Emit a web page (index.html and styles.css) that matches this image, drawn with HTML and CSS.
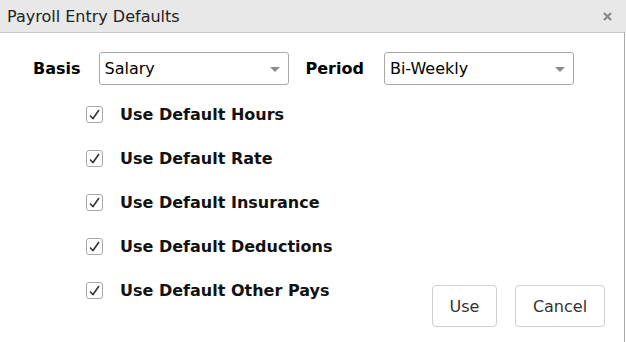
FILE: index.html
```html
<!DOCTYPE html>
<html lang="en">
<head>
    <meta charset="UTF-8">
    <title>Payroll Entry Defaults</title>
    <link rel="stylesheet" href="styles.css">
</head>
<body>
    <div class="dialog">
        <div class="titlebar">
            <span class="title">Payroll Entry Defaults</span>
            <span class="close">
                <svg width="9" height="9" viewBox="0 0 9 9"><path d="M1 1L8 8M8 1L1 8" stroke="#8a8a8a" stroke-width="2.2"/></svg>
            </span>
        </div>
        <div class="dialog-body">
            <div class="fields">
                <label class="field-label basis-label">Basis</label>
                <div class="select">
                    <span>Salary</span>
                    <span class="arrow"></span>
                </div>
                <label class="field-label period-label">Period</label>
                <div class="select">
                    <span>Bi-Weekly</span>
                    <span class="arrow"></span>
                </div>
            </div>
            <div class="bottom">
                <div class="options">
                    <div class="option"><span class="check"><svg width="13" height="13" viewBox="0 0 13 13"><path d="M2 7.5L5 10.5L11 2" fill="none" stroke="#333" stroke-width="1.6"/></svg></span>Use Default Hours</div>
                    <div class="option"><span class="check"><svg width="13" height="13" viewBox="0 0 13 13"><path d="M2 7.5L5 10.5L11 2" fill="none" stroke="#333" stroke-width="1.6"/></svg></span>Use Default Rate</div>
                    <div class="option"><span class="check"><svg width="13" height="13" viewBox="0 0 13 13"><path d="M2 7.5L5 10.5L11 2" fill="none" stroke="#333" stroke-width="1.6"/></svg></span>Use Default Insurance</div>
                    <div class="option"><span class="check"><svg width="13" height="13" viewBox="0 0 13 13"><path d="M2 7.5L5 10.5L11 2" fill="none" stroke="#333" stroke-width="1.6"/></svg></span>Use Default Deductions</div>
                    <div class="option"><span class="check"><svg width="13" height="13" viewBox="0 0 13 13"><path d="M2 7.5L5 10.5L11 2" fill="none" stroke="#333" stroke-width="1.6"/></svg></span>Use Default Other Pays</div>
                </div>
                <div class="actions">
                    <button class="btn btn-use">Use</button>
                    <button class="btn btn-cancel">Cancel</button>
                </div>
            </div>
        </div>
    </div>
</body>
</html>
```

FILE: styles.css
```css
body {
    margin: 0;
    background: #fff;
    font-family: "DejaVu Sans", Verdana, sans-serif;
    color: #000;
}
.dialog {
    width: 626px;
    height: 342px;
    display: flex;
    flex-direction: column;
}
.titlebar {
    height: 32px;
    background: #e8e8e8;
    border-bottom: 1px solid #c8c8c8;
    display: flex;
    align-items: center;
    justify-content: space-between;
    padding: 0 14px 0 7px;
}
.title {
    font-size: 16px;
    color: #222;
}
.close {
    display: flex;
    align-items: center;
    margin-top: 1px;
}
.dialog-body {
    flex: 1;
    width: 624px;
    border-right: 1px solid #a8a8a8;
    display: flex;
    flex-direction: column;
}
.fields {
    display: flex;
    align-items: center;
    padding: 19px 0 0 33px;
}
.field-label {
    font-size: 16px;
    font-weight: bold;
}
.basis-label {
    margin-right: 18px;
}
.period-label {
    margin: 0 20px 0 17px;
}
.select {
    height: 31px;
    width: 175px;
    border: 1px solid #a9a9a9;
    border-radius: 3px;
    display: flex;
    align-items: center;
    justify-content: space-between;
    padding: 0 8px 0 5px;
    font-size: 16px;
}
.arrow {
    width: 0;
    height: 0;
    border-left: 5px solid transparent;
    border-right: 5px solid transparent;
    border-top: 5px solid #8c8c8c;
    margin-top: 1px;
}
.bottom {
    flex: 1;
    display: flex;
    justify-content: space-between;
}
.options {
    padding: 7px 0 0 86px;
}
.option {
    height: 44px;
    display: flex;
    align-items: center;
    font-size: 16px;
    font-weight: bold;
    color: #111;
}
.check {
    width: 15px;
    height: 15px;
    border: 1px solid #a8a8a8;
    border-radius: 3px;
    display: flex;
    align-items: center;
    justify-content: center;
    margin-right: 17px;
}
.actions {
    align-self: flex-end;
    display: flex;
    gap: 18px;
    padding: 0 19px 15px 0;
}
.btn {
    height: 42px;
    background: #fff;
    border: 1px solid #cfcfcf;
    border-radius: 4px;
    font-family: "DejaVu Sans", Verdana, sans-serif;
    font-size: 16px;
    color: #333;
    cursor: pointer;
}
.btn-use {
    width: 65px;
}
.btn-cancel {
    width: 90px;
}
```
